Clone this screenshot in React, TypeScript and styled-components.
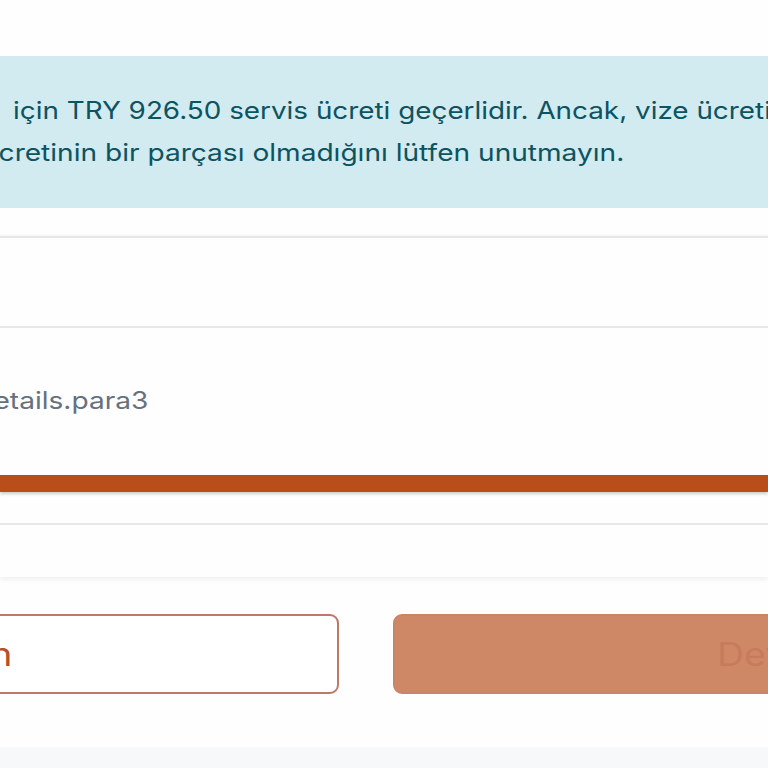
import React from "react";
import styled, { createGlobalStyle } from "styled-components";

const Global = createGlobalStyle`
  html, body { margin: 0; padding: 0; background: #ffffff; }
  body { font-family: Inter, "Noto Sans", sans-serif; -webkit-font-smoothing: antialiased; }
  #root { width: 768px; height: 768px; overflow: hidden; }
`;

const Page = styled.div`
  width: 768px;
  height: 768px;
  overflow: hidden;
  display: flex;
  flex-direction: column;
  background: #fefefe;
`;

const TopSpace = styled.div`
  height: 56px;
  background: #fefefe;
`;

const Alert = styled.div`
  height: 152px;
  box-sizing: border-box;
  padding: 34px 0;
  background: #d1ebf0;
  color: #0d5360;
  font-size: 24px;
  line-height: 42px;
  overflow: hidden;
`;

const Line = styled.div<{ $offset: number }>`
  white-space: nowrap;
  margin-left: ${(p) => p.$offset}px;
`;

const Wide = styled.span<{ $origin?: string; $scale?: number }>`
  display: inline-block;
  white-space: nowrap;
  transform: scaleX(${(p) => p.$scale ?? 1.17});
  transform-origin: ${(p) => p.$origin || "left"} center;
`;

const Gap = styled.div<{ $h: number }>`
  height: ${(p) => p.$h}px;
`;

const Card = styled.div`
  border-top: 2px solid #e7e7e7;
  box-shadow: 0 -1px 2px rgba(0, 0, 0, 0.04), 0 3px 4px rgba(0, 0, 0, 0.05);
  background: #fefefe;
  display: flex;
  flex-direction: column;
`;

const Section = styled.div<{ $h: number }>`
  height: ${(p) => p.$h}px;
  box-sizing: border-box;
  border-bottom: 2px solid #e7e7e7;
  overflow: hidden;
`;

const Para = styled.p`
  margin: 0 0 0 -80px;
  padding-top: 57px;
  font-size: 24px;
  line-height: 32px;
  color: #66717e;
  white-space: nowrap;
`;

const Accent = styled.div`
  height: 17px;
  margin-top: 58px;
  background: #b94e1a;
  box-shadow: 0 2px 3px rgba(0, 0, 0, 0.2);
`;

const Actions = styled.div`
  display: flex;
  gap: 54px;
  padding: 37px 0 53px;
  margin-left: -415px;
`;

const Button = styled.button<{ $filled?: boolean }>`
  width: 754px;
  height: 80px;
  flex: none;
  box-sizing: border-box;
  display: flex;
  align-items: center;
  justify-content: center;
  padding: ${(p) => (p.$filled ? "0 0 0 16px" : "0 54px 0 0")};
  border-radius: 9px;
  font-family: Inter, "Noto Sans", sans-serif;
  font-size: 32px;
  cursor: pointer;
  border: 2px solid ${(p) => (p.$filled ? "#c98569" : "#bf7866")};
  background: ${(p) => (p.$filled ? "#cf8866" : "#ffffff")};
  color: ${(p) => (p.$filled ? "#c57c5d" : "#b5502b")};
`;

const Footer = styled.div`
  flex: 1;
  background: #f7f8f9;
`;

export default function App() {
  return (
    <Page>
      <Global />
      <TopSpace />
      <Alert>
        <Line $offset={13}>
          <Wide $scale={1.16}>için TRY 926.50 servis ücreti geçerlidir. Ancak, vize ücretinin</Wide>
        </Line>
        <Line $offset={-18}>
          <Wide>ücretinin bir parçası olmadığını lütfen unutmayın.</Wide>
        </Line>
      </Alert>
      <Gap $h={28} />
      <Card>
        <Section $h={90} />
        <Section $h={197}>
          <Para>
            <Wide>visaDetails.para3</Wide>
          </Para>
          <Accent />
        </Section>
        <Gap $h={52} />
      </Card>
      <Actions>
        <Button>
          <Wide $origin="center">Geri Dön</Wide>
        </Button>
        <Button $filled disabled>
          <Wide $origin="center">Devam</Wide>
        </Button>
      </Actions>
      <Footer />
    </Page>
  );
}
